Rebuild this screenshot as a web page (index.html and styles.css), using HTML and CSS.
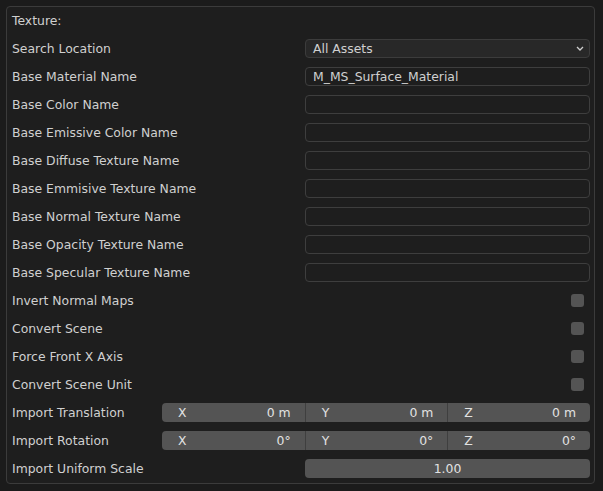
FILE: index.html
```html
<!DOCTYPE html>
<html>
<head>
<meta charset="utf-8">
<link rel="stylesheet" href="styles.css">
</head>
<body>
<div class="panel">
  <div class="label span2">Texture:</div><div></div>

  <div class="label span2">Search Location</div>
  <div class="select">All Assets
    <svg class="chev" width="8" height="5" viewBox="0 0 8 5"><path d="M1 1 L4 4 L7 1" fill="none" stroke="#cfcfcf" stroke-width="1.3"/></svg>
  </div>

  <div class="label span2">Base Material Name</div><div class="text">M_MS_Surface_Material</div>
  <div class="label span2">Base Color Name</div><div class="text"></div>
  <div class="label span2">Base Emissive Color Name</div><div class="text"></div>
  <div class="label span2">Base Diffuse Texture Name</div><div class="text"></div>
  <div class="label span2">Base Emmisive Texture Name</div><div class="text"></div>
  <div class="label span2">Base Normal Texture Name</div><div class="text"></div>
  <div class="label span2">Base Opacity Texture Name</div><div class="text"></div>
  <div class="label span2">Base Specular Texture Name</div><div class="text"></div>

  <div class="label span2">Invert Normal Maps</div><div class="check-cell"><span class="check"></span></div>
  <div class="label span2">Convert Scene</div><div class="check-cell"><span class="check"></span></div>
  <div class="label span2">Force Front X Axis</div><div class="check-cell"><span class="check"></span></div>
  <div class="label span2">Convert Scene Unit</div><div class="check-cell"><span class="check"></span></div>

  <div class="label">Import Translation</div>
  <div class="vector span2">
    <div class="comp"><span>X</span><span>0 m</span></div>
    <div class="comp"><span>Y</span><span>0 m</span></div>
    <div class="comp"><span>Z</span><span>0 m</span></div>
  </div>
  <div class="label">Import Rotation</div>
  <div class="vector span2">
    <div class="comp"><span>X</span><span>0°</span></div>
    <div class="comp"><span>Y</span><span>0°</span></div>
    <div class="comp"><span>Z</span><span>0°</span></div>
  </div>
  <div class="label span2">Import Uniform Scale</div><div class="number">1.00</div>
</div>
</body>
</html>
```

FILE: styles.css
```css
html, body {
  margin: 0;
  padding: 0;
  background: #1b1b1b;
}
body {
  font-family: "DejaVu Sans", sans-serif;
  font-size: 12.4px;
  color: #d0d0d0;
}
.panel {
  margin: 6px 0 0 6px;
  width: 589px;
  height: 478px;
  border: 1px solid #3b3b3b;
  border-radius: 4px;
  background: #1e1e1e;
  padding: 0 4px 0 5px;
  box-sizing: border-box;
  display: grid;
  grid-template-columns: 150px 143px 1fr;
  grid-template-rows: 27px repeat(16, 28px);
  align-items: center;
}
.label {
  white-space: nowrap;
}
.span2 {
  grid-column: span 2;
}
.select, .text, .number {
  height: 19px;
  box-sizing: border-box;
  border-radius: 4px;
  display: flex;
  align-items: center;
}
.select {
  background: #282828;
  border: 1px solid #3c3c3c;
  padding-left: 7px;
  justify-content: space-between;
  padding-right: 5px;
}
.text {
  background: #1e1e1e;
  border: 1px solid #3e3e3e;
  padding-left: 7px;
}
.number {
  background: #545454;
  justify-content: center;
  color: #e2e2e2;
}
.check-cell {
  display: flex;
  justify-content: flex-end;
  padding-right: 6px;
}
.check {
  width: 13px;
  height: 13px;
  border-radius: 3px;
  background: #545454;
}
.vector {
  height: 19px;
  display: grid;
  grid-template-columns: 1fr 1fr 1fr;
  background: #545454;
  border-radius: 4px;
  overflow: hidden;
  color: #e2e2e2;
}
.comp {
  display: flex;
  justify-content: space-between;
  align-items: center;
  padding: 0 14px 0 16px;
  border-left: 1px solid #3f3f3f;
}
.comp:first-child {
  border-left: none;
}
```
